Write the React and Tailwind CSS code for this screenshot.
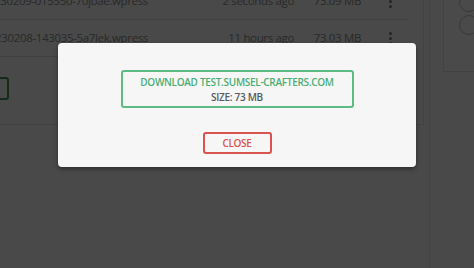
import React from 'react';

const rows = [
  { name: 'test.sumsel-crafters.com-20230209-015550-70jbae.wpress', time: '2 seconds ago', size: '73.09 MB' },
  { name: 'test.sumsel-crafters.com-20230208-143035-5a7lek.wpress', time: '11 hours ago', size: '73.03 MB' },
];

function Kebab() {
  return (
    <div className="flex flex-col items-center gap-[2px]">
      <span className="w-[3px] h-[3px] rounded-full bg-[#777]" />
      <span className="w-[3px] h-[3px] rounded-full bg-[#777]" />
      <span className="w-[3px] h-[3px] rounded-full bg-[#777]" />
    </div>
  );
}

export default function App() {
  return (
    <div className="relative w-[474px] h-[268px] overflow-hidden bg-[#f3f3f3] font-['Open_Sans',sans-serif]">
      {/* page behind the dialog */}
      <div className="flex h-full">
        <div className="w-[424px] h-[125px] border-r border-b border-[#dcdcdc] bg-[#f5f5f5] shrink-0">
          <div className="mt-[-17px] w-[408px]">
            {rows.map((r) => (
              <div key={r.size} className="flex items-center h-[37px] border-b border-[#d6d6d6] text-[11.5px] tracking-[-0.35px] text-[#8a8a8a]">
                <div className="w-[148px] flex justify-end overflow-hidden whitespace-nowrap">{r.name}</div>
                <div className="w-[146px] text-right whitespace-nowrap">{r.time}</div>
                <div className="w-[67px] text-right whitespace-nowrap">{r.size}</div>
                <div className="w-[31px] flex justify-end">
                  <Kebab />
                </div>
              </div>
            ))}
          </div>
          <div className="mt-[20px] ml-[-20px] w-[29px] h-[23px] rounded-[3px] border-2 border-[#3f8f5c]" />
        </div>
        <div className="w-[6px] border-r border-[#e2e2e2] shrink-0" />
        <div className="ml-[13px] w-[40px] h-[72px] border-l border-b border-[#dcdcdc] bg-[#f7f7f7] shrink-0 overflow-hidden">
          <div className="ml-[15px] mt-[-8px] flex flex-col gap-[3px]">
            <span className="w-[20px] h-[20px] rounded-full border border-[#bbb]" />
            <span className="w-[20px] h-[20px] rounded-full border border-[#bbb]" />
          </div>
        </div>
      </div>

      {/* overlay */}
      <div className="absolute inset-0 bg-black/70 flex justify-center items-start">
        <div className="mt-[43px] w-[358px] h-[124px] rounded-[4px] bg-[#f6f6f6] shadow-[0_2px_4px_rgba(0,0,0,0.4)] flex flex-col items-center pt-[27px]">
          <div className="w-[233px] h-[38px] pt-[2px] rounded-[3px] border-2 border-[#5dbb84] flex flex-col items-center justify-center leading-[15px] text-[10px] font-semibold tracking-[-0.3px]">
            <span className="text-[#4dae74]">DOWNLOAD TEST.SUMSEL-CRAFTERS.COM</span>
            <span className="text-[#555a60]">SIZE: 73 MB</span>
          </div>
          <button className="mt-[24px] w-[69px] h-[22px] rounded-[3px] border-2 border-[#d9534f] text-[10px] font-semibold tracking-[-0.3px] text-[#d9534f] flex items-center justify-center">
            CLOSE
          </button>
        </div>
      </div>
    </div>
  );
}
